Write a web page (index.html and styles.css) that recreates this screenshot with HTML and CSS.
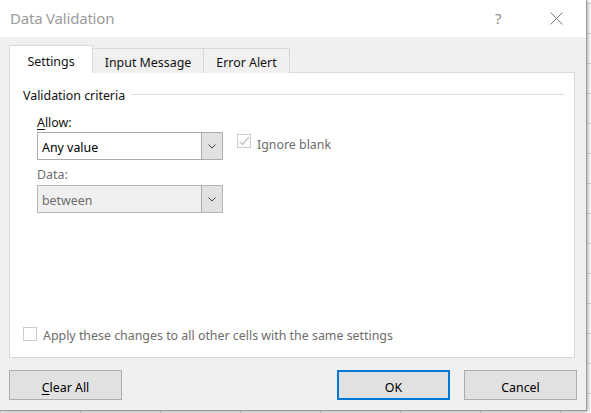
FILE: index.html
```html
<!DOCTYPE html>
<html lang="en">
<head>
<meta charset="utf-8">
<title>Data Validation</title>
<link rel="stylesheet" href="styles.css">
</head>
<body>
<div class="dialog">
  <div class="titlebar">
    <span class="title">Data Validation</span>
    <span class="help">?</span>
    <svg class="close" width="13" height="13" viewBox="0 0 13 13"><path d="M0.5 0.5L12.5 12.5M12.5 0.5L0.5 12.5" stroke="#7a7a7a" stroke-width="1" fill="none"/></svg>
  </div>
  <div class="content">
    <div class="tabs">
      <div class="tab active">Settings</div>
      <div class="tab">Input Message</div>
      <div class="tab">Error Alert</div>
    </div>
    <div class="panel">
      <div class="group-head"><span class="group-title">Validation criteria</span><span class="rule"></span></div>
      <div class="criteria">
        <div class="fields">
          <div class="label"><span class="ul">A</span>llow:</div>
          <div class="select">
            <span class="value">Any value</span>
            <span class="arrow"><svg width="8" height="5" viewBox="0 0 8 5"><path d="M0.5 0.5L4 4L7.5 0.5" stroke="#444" stroke-width="1" fill="none"/></svg></span>
          </div>
          <div class="label disabled">Data:</div>
          <div class="select disabled">
            <span class="value">between</span>
            <span class="arrow"><svg width="8" height="5" viewBox="0 0 8 5"><path d="M0.5 0.5L4 4L7.5 0.5" stroke="#444" stroke-width="1" fill="none"/></svg></span>
          </div>
        </div>
        <div class="check ignore">
          <span class="box"><svg width="12" height="12" viewBox="0 0 12 12"><path d="M1.5 6.5L4.5 9.5L11 2" stroke="#c4c4c4" stroke-width="1.2" fill="none"/></svg></span>
          <span class="check-text">Ignore blank</span>
        </div>
      </div>
      <div class="check apply">
        <span class="box"></span>
        <span class="check-text">Apply these changes to all other cells with the same settings</span>
      </div>
    </div>
    <div class="buttons">
      <button class="btn"><span class="ul">C</span>lear All</button>
      <span class="spacer"></span>
      <button class="btn default">OK</button>
      <button class="btn">Cancel</button>
    </div>
  </div>
</div>
</body>
</html>
```
FILE: styles.css
```css
* { box-sizing: border-box; }
html, body { margin: 0; padding: 0; }
body {
  width: 591px;
  height: 413px;
  overflow: hidden;
  font-family: "Noto Sans", "Open Sans", sans-serif;
  font-size: 12.4px;
  background-color: #ffffff;
  background-image:
    repeating-linear-gradient(to right, #d4d4d4 0, #d4d4d4 1px, transparent 1px, transparent 80px),
    repeating-linear-gradient(to bottom, transparent 0, transparent 3px, #d4d4d4 3px, #d4d4d4 4px, transparent 4px, transparent 30px);
}
.dialog {
  width: 587px;
  height: 411px;
  border-right: 1px solid #9c9c9c;
  border-bottom: 1px solid #9c9c9c;
  box-shadow: 1px 1px 4px rgba(0,0,0,0.35);
  display: flex;
  flex-direction: column;
  background: #f0f0f0;
}
.titlebar {
  height: 37px;
  background: #ffffff;
  display: flex;
  align-items: center;
  padding-left: 10px;
  padding-bottom: 2px;
  flex: none;
}
.title {
  font-size: 15px;
  color: #9b9b9b;
  flex: 1;
  letter-spacing: -0.2px;
}
.help {
  font-size: 15px;
  color: #8a8a8a;
  width: 10px;
  margin-right: 45px;
}
.close { margin-right: 23px; margin-top: 1px; }
.content {
  flex: 1;
  padding: 9px 9px 0 9px;
  display: flex;
  flex-direction: column;
}
.tabs {
  display: flex;
  align-items: flex-end;
  height: 27px;
  position: relative;
  z-index: 1;
  margin-bottom: -1px;
}
.tab {
  height: 25px;
  border: 1px solid #d9d9d9;
  border-bottom: none;
  background: #f0f0f0;
  color: #111;
  text-align: center;
  line-height: 20px;
  padding-top: 4px;
  margin-left: -1px;
}
.tab:nth-child(1) { width: 84px; margin-left: 0; }
.tab:nth-child(2) { width: 112px; }
.tab:nth-child(3) { width: 87px; }
.tab.active {
  height: 28px;
  background: #ffffff;
  line-height: 22px;
  padding-top: 5px;
  position: relative;
  z-index: 2;
}
.panel {
  width: 566px;
  height: 286px;
  background: #ffffff;
  border: 1px solid #d9d9d9;
  padding: 14px 10px 13px 13px;
  display: flex;
  flex-direction: column;
}
.group-head {
  display: flex;
  align-items: center;
  height: 16px;
  color: #111;
}
.group-title { line-height: 16px; padding-top: 2px; }
.rule {
  flex: 1;
  height: 1px;
  background: #dcdcdc;
  margin-left: 6px;
  margin-top: -1px;
}
.criteria {
  display: flex;
  padding-left: 14px;
  margin-top: 10px;
}
.fields { width: 186px; }
.label {
  box-sizing: content-box;
  height: 14px;
  padding-top: 2px;
  line-height: 16px;
  color: #111;
}
.label.disabled { color: #6d6d6d; margin-top: 5px; }
.ul { text-decoration: underline; text-underline-offset: 2px; }
.select {
  margin-top: 3px;
  height: 28px;
  border: 1px solid #adadad;
  background: #ffffff;
  display: flex;
  align-items: stretch;
}
.select.disabled {
  margin-top: 4px;
  background: #f0f0f0;
  border-color: #b5b5b5;
}
.select .value {
  flex: 1;
  padding-left: 4px;
  padding-top: 4px;
  line-height: 22px;
  color: #000;
}
.select.disabled .value { color: #6d6d6d; }
.arrow {
  width: 21px;
  background: #e1e1e1;
  border-left: 1px solid #adadad;
  display: flex;
  align-items: center;
  justify-content: center;
  padding-top: 1px;
}
.check {
  display: flex;
  align-items: center;
  color: #6d6d6d;
}
.check .box {
  width: 14px;
  height: 14px;
  border: 1px solid #cccccc;
  background: #ffffff;
  display: flex;
  align-items: center;
  justify-content: center;
  flex: none;
}
.check-text { margin-left: 6px; line-height: 16px; padding-top: 4px; }
.ignore {
  margin-left: 14px;
  margin-top: 15px;
  align-self: flex-start;
}
.ignore .check-text { padding-top: 9px; }
.apply {
  margin-top: auto;
}
.buttons {
  display: flex;
  margin-top: 12px;
}
.spacer { flex: 1; }
.btn {
  width: 113px;
  height: 30px;
  border: 1px solid #adadad;
  background: #e1e1e1;
  font-family: "Noto Sans", "Open Sans", sans-serif;
  font-size: 12.4px;
  color: #000;
  padding: 4px 0 0 0;
  margin: 0;
}
.btn.default {
  border: 2px solid #0078d7;
  margin-right: 14px;
}
```
